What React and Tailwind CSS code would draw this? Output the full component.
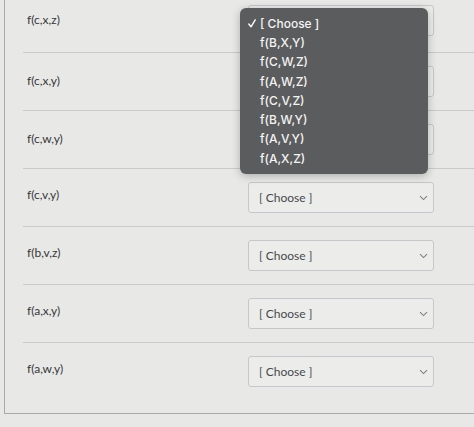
import React from "react";

const rows = ["f(c,x,z)", "f(c,x,y)", "f(c,w,y)", "f(c,v,y)", "f(b,v,z)", "f(a,x,y)", "f(a,w,y)"];
const options = ["f(B,X,Y)", "f(C,W,Z)", "f(A,W,Z)", "f(C,V,Z)", "f(B,W,Y)", "f(A,V,Y)", "f(A,X,Z)"];

function Select({ covered }) {
  return (
    <div className="w-[186px] h-[31px] flex items-center justify-between border border-[#c4c8ca] rounded-[3px] bg-[#ecedeb] pl-[10px] pr-[4px]">
      <span className="text-[12px] text-[#46494c] leading-none">{covered ? "" : "[ Choose ]"}</span>
      <svg width="9" height="6" viewBox="0 0 9 6" className="mr-[1px]">
        <path d="M1 1.2 L4.5 4.6 L8 1.2" fill="none" stroke="#7d8185" strokeWidth="1.1" />
      </svg>
    </div>
  );
}

export default function App() {
  return (
    <div className="relative w-[474px] h-[427px] overflow-hidden bg-[#e8e8e6] font-['Lato',sans-serif]">
      <div className="ml-[4px] h-[414px] border-l border-b border-[#aaaaa8] pl-[18px]">
        {rows.map((label, i) => (
          <div
            key={label}
            className={
              i === 0
                ? "h-[52px] flex items-start pt-[5px]"
                : "h-[58px] flex items-start pt-[13px] border-t border-[#cacac8]"
            }
          >
            <div className={(i < 3 ? "pt-[7px]" : "pt-[5px]") + " w-[225px] pl-[4px] text-[12px] leading-[16px] text-[#35373a]"}>{label}</div>
            <Select covered={i < 3} />
          </div>
        ))}
      </div>

      <div className="absolute left-[240px] top-[8px] w-[188px] h-[166px] rounded-[6px] bg-[#5b5c5d] shadow-[0_2px_8px_rgba(0,0,0,0.25)] py-[6px] font-['Inter',sans-serif] text-[12px] font-medium text-[#f4f4f4]">
        <div className="h-[19.3px] flex items-center">
          <span className="w-[20px] pl-[8px] flex items-center">
            <svg width="8" height="9" viewBox="0 0 8 9">
              <path d="M0.8 5 L3 7.8 L7.2 0.8" fill="none" stroke="#f4f4f4" strokeWidth="1.5" strokeLinecap="round" strokeLinejoin="round" />
            </svg>
          </span>
          <span className="leading-none">[ Choose ]</span>
        </div>
        {options.map((o) => (
          <div key={o} className="h-[19.3px] flex items-center pl-[20px]">
            <span className="leading-none">{o}</span>
          </div>
        ))}
      </div>
    </div>
  );
}
